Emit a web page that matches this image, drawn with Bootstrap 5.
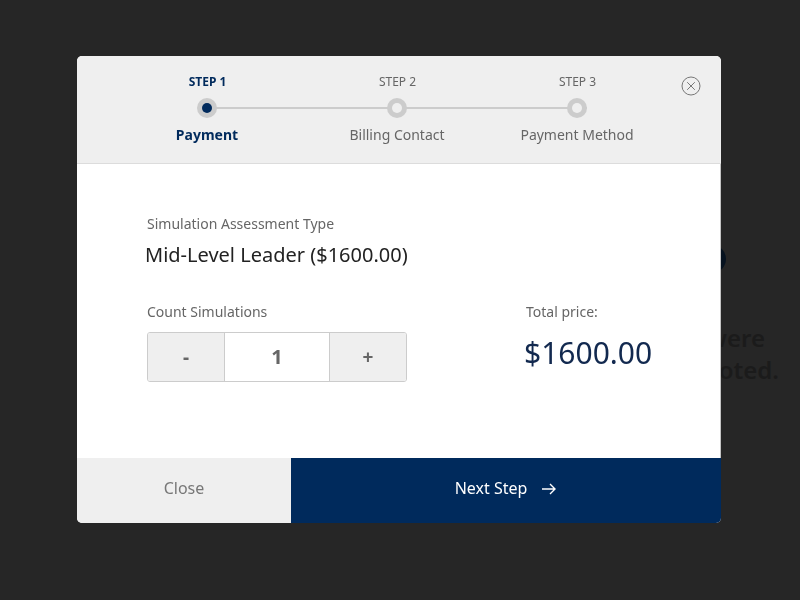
<!DOCTYPE html>
<html lang="en">
<head>
<meta charset="utf-8">
<title>Payment</title>
<link href="https://cdn.jsdelivr.net/npm/bootstrap@5.3.0/dist/css/bootstrap.min.css" rel="stylesheet">
<style>
html,body{height:100%}
body{background:#262626;font-family:"Noto Sans","Open Sans",sans-serif;overflow:hidden}
.page-under{height:600px;padding:245px 0 0}
.under-dot{width:28px;height:28px;border-radius:50%;background:#06121f;margin-left:698px}
.under-text{font-size:24px;font-weight:600;line-height:32px;color:#1b1b1b;text-align:right;margin-top:49px}
.under-a{display:block;padding-right:35px}
.under-b{display:block;padding-right:21px}
.overlay{padding:56px 0 0 77px}
.sheet{width:644px;height:467px;background:#fff;border-radius:5px;overflow:hidden}
.sheet-head{height:108px;background:#efefef;border-bottom:1px solid #dcdcdc;padding:17px 0 0 35px}
.step-item{width:190px;color:#666}
.step-item.short{width:170px}
.step-no{font-size:12px;line-height:18px;height:18px;padding-left:1px}
.step-dot{width:20px;height:20px;border-radius:50%;background:#ccc;margin:7px 0 7px;z-index:1}
.step-dot::after{content:"";display:block;width:10px;height:10px;border-radius:50%;background:#efefef}
.step-item.on{color:#002a5c;font-weight:700}
.step-item.on .step-dot::after{background:#002a5c}
.step-line{top:34px;left:50%;width:100%;height:2px;background:#ccc}
.step-name{font-size:14px;line-height:20px}
.x-btn{top:20px;right:20px;width:20px;height:20px;line-height:0;background:none;border:0}
.sheet-body{flex:1;padding:50px 67px 0 70px;border-right:1px solid #c4c4c4}
.lbl{font-size:14px;line-height:20px;color:#666}
.type-val{font-size:20px;line-height:28px;color:#222;margin:7px 0 0 -2px}
.qty{width:260px;height:50px;margin-top:10px;border:1px solid #ccc;border-radius:3px;overflow:hidden}
.qty-btn{width:76px;background:#efefef;color:#666;font-weight:700;font-size:19px}
.qty-num{flex:1;border-left:1px solid #ccc;border-right:1px solid #ccc;color:#666;font-weight:700;font-size:20px}
.total-col{width:127px}
.total-val{font-size:30px;line-height:40px;color:#12294f;margin:11px 0 0 -2px;white-space:nowrap}
.row-gap{margin-top:33px}
.sheet-foot{height:65px}
.foot-close{width:214px;background:#efefef;color:#777;font-size:16px;border:0;border-radius:0;padding-bottom:12px}
.foot-next{flex:1;background:#002a5c;color:#fff;font-size:16px;border:0;border-radius:0;gap:14px;padding-bottom:12px}
.foot-next svg{margin-top:3px}
.foot-next:hover{background:#002a5c;color:#fff}
.foot-close:hover{background:#efefef;color:#777}
</style>
</head>
<body>
<div class="page-under">
  <div class="under-dot"></div>
  <div class="under-text"><span class="under-a">were</span><span class="under-b">oted.</span></div>
</div>
<div class="overlay position-fixed top-0 start-0 w-100 h-100">
  <div class="sheet d-flex flex-column">
    <div class="sheet-head position-relative d-flex">
      <div class="step-item on position-relative d-flex flex-column align-items-center">
        <div class="step-no">STEP 1</div>
        <div class="step-dot position-relative d-flex align-items-center justify-content-center"></div>
        <div class="step-name">Payment</div>
        <div class="step-line position-absolute"></div>
      </div>
      <div class="step-item position-relative d-flex flex-column align-items-center">
        <div class="step-no">STEP 2</div>
        <div class="step-dot position-relative d-flex align-items-center justify-content-center"></div>
        <div class="step-name">Billing Contact</div>
        <div class="step-line position-absolute"></div>
      </div>
      <div class="step-item short position-relative d-flex flex-column align-items-center">
        <div class="step-no">STEP 3</div>
        <div class="step-dot position-relative d-flex align-items-center justify-content-center"></div>
        <div class="step-name">Payment Method</div>
      </div>
      <button class="x-btn position-absolute p-0" type="button" aria-label="Close">
        <svg width="20" height="20" viewBox="0 0 20 20" fill="none" stroke="#777" stroke-width="1"><circle cx="10" cy="10" r="9"/><path d="M6.2 6.2l7.6 7.6M13.8 6.2l-7.6 7.6"/></svg>
      </button>
    </div>
    <div class="sheet-body">
      <div class="lbl">Simulation Assessment Type</div>
      <div class="type-val">Mid-Level Leader ($1600.00)</div>
      <div class="row-gap d-flex justify-content-between">
        <div>
          <div class="lbl">Count Simulations</div>
          <div class="qty d-flex">
            <div class="qty-btn d-flex align-items-center justify-content-center">-</div>
            <div class="qty-num d-flex align-items-center justify-content-center">1</div>
            <div class="qty-btn d-flex align-items-center justify-content-center">+</div>
          </div>
        </div>
        <div class="total-col">
          <div class="lbl">Total price:</div>
          <div class="total-val">$1600.00</div>
        </div>
      </div>
    </div>
    <div class="sheet-foot d-flex">
      <button class="btn foot-close" type="button">Close</button>
      <button class="btn foot-next d-flex align-items-center justify-content-center" type="button">Next Step
        <svg width="16" height="14" viewBox="0 0 16 14" fill="none" stroke="#fff" stroke-width="1.4"><path d="M1 7h13M9 2l5 5-5 5"/></svg>
      </button>
    </div>
  </div>
</div>
<script src="https://cdn.jsdelivr.net/npm/bootstrap@5.3.0/dist/js/bootstrap.bundle.min.js"></script>
</body>
</html>
